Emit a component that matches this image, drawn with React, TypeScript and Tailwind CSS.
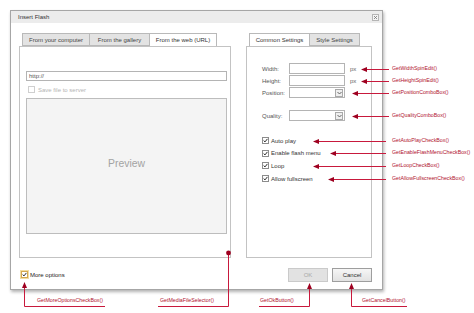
import React from 'react';

const RED = '#c8193c';
const DARK = '#9e0020';

function Check({ disabled = false, focus = false }: { disabled?: boolean; focus?: boolean }) {
  return (
    <span
      className={`flex h-[7px] w-[7px] shrink-0 items-center justify-center border bg-white ${
        focus ? 'border-[#d4a850] outline outline-1 outline-[#f3dca0]' : disabled ? 'border-[#cfcfcf]' : 'border-[#8c8c8c]'
      }`}
    >
      {!disabled && (
        <svg width="5" height="5" viewBox="0 0 5 5">
          <path d="M0.6 2.5 L2 3.9 L4.4 0.9" fill="none" stroke="#2c2c2c" strokeWidth="1" />
        </svg>
      )}
    </span>
  );
}

function Field({ combo = false }: { combo?: boolean }) {
  return (
    <span className="flex h-[11px] w-[56px] items-center justify-end border border-[#b4b4b4] bg-white pr-[1px]">
      {combo && (
        <span className="flex h-[8px] w-[8px] items-center justify-center border border-[#a9a9a9] bg-[#efefef]">
          <svg width="5" height="4" viewBox="0 0 5 4">
            <path d="M0.5 1 L2.5 3 L4.5 1" fill="none" stroke="#555" strokeWidth="0.9" />
          </svg>
        </span>
      )}
    </span>
  );
}

function FormRow({ label, combo = false, unit = false }: { label: string; combo?: boolean; unit?: boolean }) {
  return (
    <div className="flex h-[11px] items-center">
      <span className="w-[27px] text-[#555]">{label}</span>
      <Field combo={combo} />
      {unit && <span className="ml-[5px] text-[#666]">px</span>}
    </div>
  );
}

function Tab({ label, active = false, width }: { label: string; active?: boolean; width: string }) {
  return (
    <div
      className={`flex h-[13px] items-center justify-center border border-[#b9b9b9] ${width} ${
        active ? '-mb-px h-[14px] border-b-white bg-white text-[#333]' : 'bg-[#e3e3e3] text-[#444]'
      }`}
    >
      {label}
    </div>
  );
}

const rightArrows = [
  { tip: 361, y: 69, end: 389, label: 'GetWidthSpinEdit()', top: 'top-[66px]' },
  { tip: 361, y: 81, end: 389, label: 'GetHeightSpinEdit()', top: 'top-[78px]' },
  { tip: 352, y: 93, end: 389, label: 'GetPositionComboBox()', top: 'top-[90px]' },
  { tip: 352, y: 116, end: 389, label: 'GetQualityComboBox()', top: 'top-[113px]' },
  { tip: 313, y: 141, end: 386, label: 'GetAutoPlayCheckBox()', top: 'top-[138px]' },
  { tip: 330, y: 153, end: 386, label: 'GetEnableFlashMenuCheckBox()', top: 'top-[150px]' },
  { tip: 313, y: 166, end: 386, label: 'GetLoopCheckBox()', top: 'top-[163px]' },
  { tip: 328, y: 179, end: 386, label: 'GetAllowFullscreenCheckBox()', top: 'top-[176px]' },
];

function Annotations() {
  return (
    <>
      <svg className="pointer-events-none absolute left-0 top-0" width="474" height="313">
        {rightArrows.map((a) => (
          <g key={a.label}>
            <line x1={a.tip + 4} y1={a.y + 0.5} x2={a.end} y2={a.y + 0.5} stroke={RED} strokeWidth="1" />
            <polygon points={`${a.tip},${a.y + 0.5} ${a.tip + 6},${a.y - 2} ${a.tip + 6},${a.y + 3}`} fill={DARK} />
          </g>
        ))}
        {/* more options */}
        <polyline points="24.5,286 24.5,306.5 105,306.5" fill="none" stroke={RED} strokeWidth="1" />
        <polygon points="24.5,282 22,288 27,288" fill={DARK} />
        {/* media file selector */}
        <polyline points="228.5,253 228.5,306.5 158,306.5" fill="none" stroke={RED} strokeWidth="1" />
        <circle cx="228.5" cy="253" r="2.4" fill={DARK} />
        {/* ok */}
        <polyline points="309.5,286 309.5,306.5 259,306.5" fill="none" stroke={RED} strokeWidth="1" />
        <polygon points="309.5,283 307,289 312,289" fill={DARK} />
        {/* cancel */}
        <polyline points="351.5,286 351.5,306.5 407,306.5" fill="none" stroke={RED} strokeWidth="1" />
        <polygon points="351.5,283 349,289 354,289" fill={DARK} />
      </svg>
      {rightArrows.map((a) => (
        <span key={a.label} className={`absolute left-[392px] ${a.top} leading-none text-[5.25px] text-[#b0102c]`}>
          {a.label}
        </span>
      ))}
      <span className="absolute left-[37px] top-[298px] leading-none text-[5.25px] text-[#b0102c]">GetMoreOptionsCheckBox()</span>
      <span className="absolute left-[160px] top-[298px] leading-none text-[5.25px] text-[#b0102c]">GetMediaFileSelector()</span>
      <span className="absolute left-[260px] top-[298px] leading-none text-[5.25px] text-[#b0102c]">GetOkButton()</span>
      <span className="absolute left-[362px] top-[298px] leading-none text-[5.25px] text-[#b0102c]">GetCancelButton()</span>
    </>
  );
}

export default function App() {
  return (
    <div className="relative h-[313px] w-[474px] overflow-hidden bg-white font-['Liberation_Sans',Arial,sans-serif] text-[6px] leading-none text-[#404040]">
      <div className="ml-[10px] mt-[10px] flex h-[280px] w-[373px] flex-col border border-[#a6a6a6] bg-white shadow-[1px_2px_3px_rgba(0,0,0,0.3)]">
        {/* Header */}
        <div className="flex h-[12px] items-center justify-between bg-[#ececec] pl-[7px] pr-[3px]">
          <span className="text-[#333]">Insert Flash</span>
          <span className="flex h-[7px] w-[7px] items-center justify-center border border-[#b5b5b5] bg-[#f4f4f4]">
            <svg width="5" height="5" viewBox="0 0 5 5">
              <path d="M1 1 L4 4 M4 1 L1 4" stroke="#777" strokeWidth="0.8" />
            </svg>
          </span>
        </div>

        {/* Body */}
        <div className="flex pl-[8px] pt-[10px]">
          {/* Media selector */}
          <div className="flex w-[212px] flex-col">
            <div className="flex items-end pl-[3px]">
              <Tab label="From your computer" width="w-[68px]" />
              <Tab label="From the gallery" width="w-[60px] border-l-0" />
              <Tab label="From the web (URL)" width="w-[67px] border-l-0" active />
            </div>
            <div className="flex h-[212px] flex-col border border-[#c3c3c3] px-[6px] pt-[24px]">
              <div className="flex h-[10px] w-[201px] items-center border border-[#b4b4b4] pl-[2px] text-[#555]">http://</div>
              <div className="mt-[5px] flex items-center gap-[3px] pl-[2px] text-[#b4b4b4]">
                <Check disabled />
                <span>Save file to server</span>
              </div>
              <div className="mt-[5px] flex h-[136px] w-[201px] items-center justify-center border border-[#bdbdbd] bg-[#f4f4f4] pb-[4px] text-[10.4px] text-[#a3a3a3]">
                Preview
              </div>
            </div>
          </div>

          {/* Settings */}
          <div className="ml-[15px] flex w-[126px] flex-col">
            <div className="flex items-end pl-[3px]">
              <Tab label="Common Settings" width="w-[61px]" active />
              <Tab label="Style Settings" width="w-[50px] border-l-0" />
            </div>
            <div className="flex h-[212px] flex-col border border-[#c3c3c3] pl-[15px] pt-[16px]">
              <div className="flex flex-col gap-[1px]">
                <FormRow label="Width:" unit />
                <FormRow label="Height:" unit />
                <FormRow label="Position:" combo />
              </div>
              <div className="mt-[12px]">
                <FormRow label="Quality:" combo />
              </div>
              <div className="mt-[16px] flex flex-col gap-[5.7px] text-[#333]">
                {['Auto play', 'Enable flash menu', 'Loop', 'Allow fullscreen'].map((t) => (
                  <div key={t} className="flex items-center gap-[2px]">
                    <Check />
                    <span>{t}</span>
                  </div>
                ))}
              </div>
            </div>
          </div>
        </div>

        {/* Footer */}
        <div className="flex items-start justify-between pl-[10px] pr-[10px] pt-[10px]">
          <div className="mt-[3px] flex items-center gap-[2px] text-[#222]">
            <Check focus />
            <span>More options</span>
          </div>
          <div className="flex gap-[4px]">
            <button className="h-[14px] w-[40px] border border-[#cacaca] bg-[#e2e2e2] text-[#a9a9a9]">OK</button>
            <button className="h-[14px] w-[40px] border border-[#9e9e9e] bg-gradient-to-b from-[#f6f6f6] to-[#e2e2e2] text-[#303030]">
              Cancel
            </button>
          </div>
        </div>
      </div>
      <Annotations />
    </div>
  );
}
